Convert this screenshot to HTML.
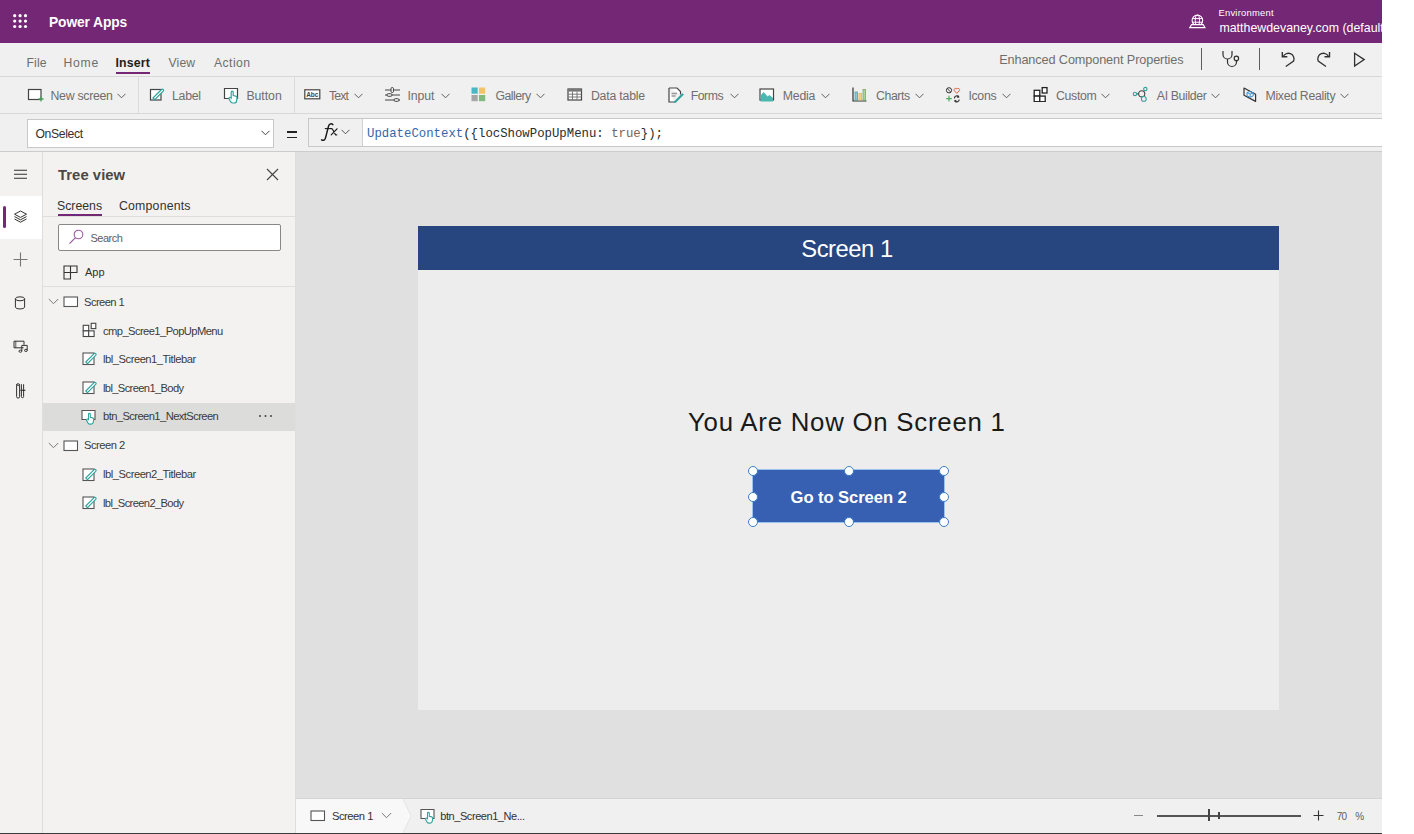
<!DOCTYPE html>
<html><head><meta charset="utf-8"><style>
html,body{margin:0;padding:0;width:1414px;height:834px;overflow:hidden;background:#ffffff;}
.t{position:absolute;white-space:pre;font-family:"Liberation Sans",sans-serif;}
.r{position:absolute;}
</style></head><body>
<div class="r" style="left:0px;top:0px;width:1382px;height:43px;background:#742774;"></div>
<div class="r" style="left:0px;top:43px;width:1382px;height:33px;background:#f0f0f0;"></div>
<div class="r" style="left:0px;top:76px;width:1382px;height:1px;background:#d8d8d8;"></div>
<div class="r" style="left:0px;top:77px;width:1382px;height:36px;background:#f0f0f0;"></div>
<div class="r" style="left:0px;top:113px;width:1382px;height:1px;background:#d8d8d8;"></div>
<div class="r" style="left:0px;top:114px;width:1382px;height:37px;background:#f0f0f0;"></div>
<div class="r" style="left:0px;top:151px;width:1382px;height:1px;background:#cccccc;"></div>
<div class="r" style="left:0px;top:152px;width:42px;height:681px;background:#f3f2f1;"></div>
<div class="r" style="left:42px;top:152px;width:1px;height:681px;background:#dedede;"></div>
<div class="r" style="left:43px;top:152px;width:252px;height:681px;background:#f3f2f1;"></div>
<div class="r" style="left:295px;top:152px;width:1px;height:681px;background:#dedede;"></div>
<div class="r" style="left:296px;top:152px;width:1086px;height:646px;background:#e0e0e0;"></div>
<div class="r" style="left:296px;top:798px;width:1086px;height:35px;background:#f0f0f0;"></div>
<div class="r" style="left:296px;top:798px;width:1086px;height:1px;background:#d4d4d4;"></div>
<div class="r" style="left:0px;top:833px;width:1382px;height:1px;background:#3a3a3a;"></div>
<svg class="r" style="left:13px;top:14px;" width="15" height="15" viewBox="0 0 15 15" fill="none"><circle cx="1.7" cy="1.7" r="1.6" fill="#fff"/><circle cx="1.7" cy="7.1" r="1.6" fill="#fff"/><circle cx="1.7" cy="12.5" r="1.6" fill="#fff"/><circle cx="7.1" cy="1.7" r="1.6" fill="#fff"/><circle cx="7.1" cy="7.1" r="1.6" fill="#fff"/><circle cx="7.1" cy="12.5" r="1.6" fill="#fff"/><circle cx="12.5" cy="1.7" r="1.6" fill="#fff"/><circle cx="12.5" cy="7.1" r="1.6" fill="#fff"/><circle cx="12.5" cy="12.5" r="1.6" fill="#fff"/></svg>
<div class="t" style="left:49px;top:16.02px;font-size:13.8px;line-height:13.8px;color:#ffffff;font-weight:700;font-family:'Liberation Sans';letter-spacing:-0.111px;">Power Apps</div>
<svg class="r" style="left:1189px;top:14px;" width="18" height="15" viewBox="0 0 18 15" fill="none"><circle cx="8.4" cy="6.4" r="5.3" stroke="#fff" stroke-width="1.1"/><ellipse cx="8.4" cy="6.4" rx="2.1" ry="5.3" stroke="#fff" stroke-width="1"/><path d="M3.3 4.6h10.2M3.3 8.2h10.2" stroke="#fff" stroke-width="1"/><path d="M2.6 10.6h11.6l1.8 3h-15.2z" stroke="#fff" stroke-width="1.1" fill="#742774"/></svg>
<div class="t" style="left:1218.4px;top:7.64px;font-size:9.4px;line-height:9.4px;color:#ffffff;font-weight:400;font-family:'Liberation Sans';letter-spacing:0.26px;">Environment</div>
<div class="t" style="left:1219.4px;top:21.50px;font-size:12.4px;line-height:12.4px;color:#ffffff;font-weight:400;font-family:'Liberation Sans';letter-spacing:0px;">matthewdevaney.com (default)</div>
<div class="r" style="left:1382px;top:0px;width:32px;height:834px;background:#ffffff;"></div>
<div class="t" style="left:26.6px;top:56.97px;font-size:12.2px;line-height:12.2px;color:#706e6c;font-weight:400;font-family:'Liberation Sans';letter-spacing:0.067px;">File</div>
<div class="t" style="left:63.5px;top:56.97px;font-size:12.2px;line-height:12.2px;color:#706e6c;font-weight:400;font-family:'Liberation Sans';letter-spacing:0.767px;">Home</div>
<div class="t" style="left:168.6px;top:56.97px;font-size:12.2px;line-height:12.2px;color:#706e6c;font-weight:400;font-family:'Liberation Sans';letter-spacing:0.1px;">View</div>
<div class="t" style="left:214px;top:56.97px;font-size:12.2px;line-height:12.2px;color:#706e6c;font-weight:400;font-family:'Liberation Sans';letter-spacing:0.44px;">Action</div>
<div class="t" style="left:115.4px;top:56.89px;font-size:12.3px;line-height:12.3px;color:#201f1e;font-weight:700;font-family:'Liberation Sans';letter-spacing:0.2px;">Insert</div>
<div class="r" style="left:116px;top:72px;width:34px;height:2px;background:#742774;"></div>
<div class="t" style="left:999.2px;top:54.45px;font-size:12.7px;line-height:12.7px;color:#706e6c;font-weight:400;font-family:'Liberation Sans';letter-spacing:-0.114px;">Enhanced Component Properties</div>
<div class="r" style="left:1201px;top:48px;width:1px;height:22px;background:#605e5c;"></div>
<div class="r" style="left:1259px;top:48px;width:1px;height:22px;background:#605e5c;"></div>
<svg class="r" style="left:1215px;top:46px;" width="160" height="26" viewBox="0 0 160 26" fill="none"><path d="M8 5V8.5a4.5 4.5 0 0 0 9 0V5" stroke="#323130" stroke-width="1.2"/><path d="M12.5 13v3a4.5 4.5 0 0 0 9 0v-1.5" stroke="#323130" stroke-width="1.2"/><circle cx="21.4" cy="12.4" r="2.2" stroke="#323130" stroke-width="1.2" fill="#f0f0f0"/><path d="M67.3 6v4.8h5" stroke="#323130" stroke-width="1.4"/><path d="M68.2 10.8A5.6 5.6 0 1 1 78.6 15L70.8 20.5" stroke="#323130" stroke-width="1.3"/><path d="M114.5 6v4.8h-5" stroke="#323130" stroke-width="1.4"/><path d="M113.6 10.8A5.6 5.6 0 1 0 103.2 15L111 20.5" stroke="#323130" stroke-width="1.3"/><path d="M139.6 7.2L149.2 13.6L139.6 20z" stroke="#323130" stroke-width="1.3" stroke-linejoin="miter"/></svg>
<div class="r" style="left:138px;top:77px;width:1px;height:36px;background:#dcdcdc;"></div>
<div class="r" style="left:294px;top:77px;width:1px;height:36px;background:#dcdcdc;"></div>
<svg class="r" style="left:27px;top:88px;" width="17" height="14" viewBox="0 0 17 14" fill="none"><rect x="1.5" y="1.5" width="12.5" height="10" fill="#fff" stroke="#444" stroke-width="1.2"/><path d="M14 8.5v5M11.5 11h5" stroke="#4a9b5a" stroke-width="1.3"/></svg>
<div class="t" style="left:50.5px;top:89.59px;font-size:12.3px;line-height:12.3px;color:#706e6c;font-weight:400;font-family:'Liberation Sans';letter-spacing:-0.278px;">New screen</div>
<svg class="r" style="left:117px;top:93.2px;" width="9" height="6" viewBox="0 0 9 6" fill="none"><path d="M0.5 0.8l4 4l4-4" stroke="#605e5c" stroke-width="1"/></svg>
<svg class="r" style="left:149px;top:87px;" width="16" height="15" viewBox="0 0 16 15" fill="none"><rect x="1.5" y="2.5" width="10.5" height="10.5" fill="#fff" stroke="#444" stroke-width="1.2"/><path d="M4 11l8.5-8.5a1.2 1.2 0 0 1 1.7 1.7L5.7 12.7z" fill="#fff" stroke="#2fa39c" stroke-width="1.2"/></svg>
<div class="t" style="left:172px;top:89.59px;font-size:12.3px;line-height:12.3px;color:#706e6c;font-weight:400;font-family:'Liberation Sans';letter-spacing:-0.25px;">Label</div>
<svg class="r" style="left:223px;top:87px;" width="17" height="17" viewBox="0 0 17 17" fill="none"><path d="M6 11.5H1.5v-10h13v10h-1" fill="#fff" stroke="#444" stroke-width="1.2"/><path d="M7.5 14.5l-1.5-3a1 1 0 0 1 1.6-1l0.6 0.6v-6a1 1 0 0 1 2 0v3.5l2.6 0.6a1.5 1.5 0 0 1 1.2 1.6l-0.4 3a2.5 2.5 0 0 1-2.5 2.2h-1.5a2.5 2.5 0 0 1-2.1-1.5z" fill="#fff" stroke="#2fa39c" stroke-width="1.2"/></svg>
<div class="t" style="left:246.4px;top:89.59px;font-size:12.3px;line-height:12.3px;color:#706e6c;font-weight:400;font-family:'Liberation Sans';letter-spacing:-0.04px;">Button</div>
<svg class="r" style="left:304px;top:89px;" width="17" height="11" viewBox="0 0 17 11" fill="none"><rect x="0.8" y="0.8" width="15" height="9" fill="#fff" stroke="#444" stroke-width="1.2"/><text x="8.3" y="7.6" font-family="Liberation Sans" font-size="6.5" font-weight="700" fill="#444" text-anchor="middle">Abc</text></svg>
<div class="t" style="left:329px;top:89.59px;font-size:12.3px;line-height:12.3px;color:#706e6c;font-weight:400;font-family:'Liberation Sans';letter-spacing:-0.867px;">Text</div>
<svg class="r" style="left:354px;top:93.2px;" width="9" height="6" viewBox="0 0 9 6" fill="none"><path d="M0.5 0.8l4 4l4-4" stroke="#605e5c" stroke-width="1"/></svg>
<svg class="r" style="left:384px;top:86px;" width="17" height="17" viewBox="0 0 17 17" fill="none"><path d="M1 4h15M1 9h15M1 14h15" stroke="#444" stroke-width="1.1"/><rect x="7" y="1.5" width="2.5" height="5" rx="1.2" fill="#f0f0f0" stroke="#444" stroke-width="1"/><rect x="3" y="7.7" width="5" height="2.6" rx="1.2" fill="#f0f0f0" stroke="#444" stroke-width="1"/><rect x="10" y="12.7" width="5" height="2.6" rx="1.2" fill="#f0f0f0" stroke="#444" stroke-width="1"/></svg>
<div class="t" style="left:407.4px;top:89.59px;font-size:12.3px;line-height:12.3px;color:#706e6c;font-weight:400;font-family:'Liberation Sans';letter-spacing:-0.05px;">Input</div>
<svg class="r" style="left:441px;top:93.2px;" width="9" height="6" viewBox="0 0 9 6" fill="none"><path d="M0.5 0.8l4 4l4-4" stroke="#605e5c" stroke-width="1"/></svg>
<svg class="r" style="left:471px;top:87px;" width="15" height="15" viewBox="0 0 15 15" fill="none"><rect x="0.5" y="0.5" width="6.2" height="6.2" fill="#4ab7c3"/><rect x="8" y="0.5" width="6.2" height="6.2" fill="#f3c26e"/><rect x="0.5" y="8" width="6.2" height="6.2" fill="#a6a6a6"/><rect x="8" y="8" width="6.2" height="6.2" fill="#82b97e"/></svg>
<div class="t" style="left:495.5px;top:89.59px;font-size:12.3px;line-height:12.3px;color:#706e6c;font-weight:400;font-family:'Liberation Sans';letter-spacing:-0.55px;">Gallery</div>
<svg class="r" style="left:536px;top:93.2px;" width="9" height="6" viewBox="0 0 9 6" fill="none"><path d="M0.5 0.8l4 4l4-4" stroke="#605e5c" stroke-width="1"/></svg>
<svg class="r" style="left:567px;top:88px;" width="16" height="13" viewBox="0 0 16 13" fill="none"><rect x="1" y="1" width="13.5" height="11" fill="#fff" stroke="#444" stroke-width="1.2"/><rect x="1" y="1" width="13.5" height="2.6" fill="#777"/><path d="M1 6.2h13.5M1 9h13.5M5.5 3.5v8.5M10 3.5v8.5" stroke="#777" stroke-width="1"/></svg>
<div class="t" style="left:590.9px;top:89.59px;font-size:12.3px;line-height:12.3px;color:#706e6c;font-weight:400;font-family:'Liberation Sans';letter-spacing:-0.2px;">Data table</div>
<svg class="r" style="left:668px;top:87px;" width="16" height="16" viewBox="0 0 16 16" fill="none"><path d="M1 1h8l3.5 3.5v3M1 1v14h5" fill="#fff" stroke="#444" stroke-width="1.2"/><path d="M3.5 6.5h5.5M3.5 9h4" stroke="#999" stroke-width="1.5"/><path d="M7 15l7.5-7.5" stroke="#2fa39c" stroke-width="2.2" stroke-linecap="round"/></svg>
<div class="t" style="left:690.7px;top:89.59px;font-size:12.3px;line-height:12.3px;color:#706e6c;font-weight:400;font-family:'Liberation Sans';letter-spacing:-0.5px;">Forms</div>
<svg class="r" style="left:729.5px;top:93.2px;" width="9" height="6" viewBox="0 0 9 6" fill="none"><path d="M0.5 0.8l4 4l4-4" stroke="#605e5c" stroke-width="1"/></svg>
<svg class="r" style="left:759px;top:88px;" width="16" height="14" viewBox="0 0 16 14" fill="none"><rect x="1" y="1" width="13.5" height="11" fill="#fff" stroke="#444" stroke-width="1.2"/><path d="M1.6 7.5l3-3.5l4 4.5l2-1.5l3.3 3v3.4H1.6z" fill="#4ab7b1"/></svg>
<div class="t" style="left:782.8px;top:89.59px;font-size:12.3px;line-height:12.3px;color:#706e6c;font-weight:400;font-family:'Liberation Sans';letter-spacing:-0.25px;">Media</div>
<svg class="r" style="left:820.5px;top:93.2px;" width="9" height="6" viewBox="0 0 9 6" fill="none"><path d="M0.5 0.8l4 4l4-4" stroke="#605e5c" stroke-width="1"/></svg>
<svg class="r" style="left:852px;top:87px;" width="15" height="15" viewBox="0 0 15 15" fill="none"><path d="M1 0.5v13.5h13.5" stroke="#333" stroke-width="1.2"/><rect x="3" y="5" width="2.6" height="8" fill="#8fc8d4" stroke="#4aa7b5" stroke-width="0.8"/><rect x="7" y="6.5" width="2.6" height="6.5" fill="#f7cf8f" stroke="#eeb35c" stroke-width="0.8"/><rect x="11" y="2.5" width="2.6" height="10.5" fill="#a9d49b" stroke="#6db16a" stroke-width="0.8"/></svg>
<div class="t" style="left:876px;top:89.59px;font-size:12.3px;line-height:12.3px;color:#706e6c;font-weight:400;font-family:'Liberation Sans';letter-spacing:-0.42px;">Charts</div>
<svg class="r" style="left:914.5px;top:93.2px;" width="9" height="6" viewBox="0 0 9 6" fill="none"><path d="M0.5 0.8l4 4l4-4" stroke="#605e5c" stroke-width="1"/></svg>
<svg class="r" style="left:945px;top:86px;" width="17" height="17" viewBox="0 0 17 17" fill="none"><circle cx="4" cy="4.3" r="2.6" stroke="#333" stroke-width="1"/><path d="M2.2 2.5l3.6 3.6" stroke="#333" stroke-width="0.9"/><path d="M11.8 7.3l-2.5-2.6a1.5 1.5 0 0 1 2.5-1.7a1.5 1.5 0 0 1 2.5 1.7z" stroke="#e2603f" stroke-width="1"/><path d="M4 9.8v5.6M1.2 12.6h5.6" stroke="#4daa5a" stroke-width="1.2"/><path d="M9.4 12.4a2.4 2.4 0 0 1 4.3-1.5M14.2 13.4a2.4 2.4 0 0 1-4.3 1.5" stroke="#333" stroke-width="1.1"/><path d="M13 9.6l1.2 1.6l-1.8 0.3zM10.6 16.2l-1.2-1.6l1.8-0.3z" fill="#333" stroke="#333" stroke-width="0.6"/></svg>
<div class="t" style="left:968.4px;top:89.59px;font-size:12.3px;line-height:12.3px;color:#706e6c;font-weight:400;font-family:'Liberation Sans';letter-spacing:-0.3px;">Icons</div>
<svg class="r" style="left:1001.5px;top:93.2px;" width="9" height="6" viewBox="0 0 9 6" fill="none"><path d="M0.5 0.8l4 4l4-4" stroke="#605e5c" stroke-width="1"/></svg>
<svg class="r" style="left:1033px;top:86px;" width="15" height="16" viewBox="0 0 15 16" fill="none"><rect x="1.2" y="4.3" width="5.6" height="5.8" fill="#fff" stroke="#222" stroke-width="1.3"/><rect x="1.2" y="10.1" width="5.6" height="5.6" fill="#fff" stroke="#222" stroke-width="1.3"/><rect x="6.8" y="10.1" width="5.4" height="5.6" fill="#fff" stroke="#222" stroke-width="1.3"/><rect x="9.2" y="1.6" width="4.8" height="5.4" fill="#fff" stroke="#222" stroke-width="1.3"/></svg>
<div class="t" style="left:1056px;top:89.59px;font-size:12.3px;line-height:12.3px;color:#706e6c;font-weight:400;font-family:'Liberation Sans';letter-spacing:-0.32px;">Custom</div>
<svg class="r" style="left:1101px;top:93.2px;" width="9" height="6" viewBox="0 0 9 6" fill="none"><path d="M0.5 0.8l4 4l4-4" stroke="#605e5c" stroke-width="1"/></svg>
<svg class="r" style="left:1132px;top:86px;" width="17" height="17" viewBox="0 0 17 17" fill="none"><circle cx="9.7" cy="7.8" r="3.1" stroke="#444" stroke-width="1.1"/><path d="M4.6 7.9h2" stroke="#444" stroke-width="1.1"/><circle cx="2.9" cy="7.9" r="1.7" fill="#f0f0f0" stroke="#2fa39c" stroke-width="1.1"/><circle cx="13.3" cy="3.1" r="1.7" fill="#f0f0f0" stroke="#2fa39c" stroke-width="1.1"/><circle cx="11.8" cy="12.9" r="2.4" fill="#f0f0f0" stroke="#2fa39c" stroke-width="1.1"/></svg>
<div class="t" style="left:1156.8px;top:89.59px;font-size:12.3px;line-height:12.3px;color:#706e6c;font-weight:400;font-family:'Liberation Sans';letter-spacing:-0.356px;">AI Builder</div>
<svg class="r" style="left:1211px;top:93.2px;" width="9" height="6" viewBox="0 0 9 6" fill="none"><path d="M0.5 0.8l4 4l4-4" stroke="#605e5c" stroke-width="1"/></svg>
<svg class="r" style="left:1242px;top:86px;" width="16" height="17" viewBox="0 0 16 17" fill="none"><path d="M2 2l11.6 6.2v7.2L2 9.2z" stroke="#333" stroke-width="1.2" stroke-linejoin="round"/><path d="M5 6.6l3-1.2l3.2 1.4v3.2l-3 1.2l-3.2-1.4z" stroke="#3a8fd0" stroke-width="1"/><path d="M5 6.6l3.2 1.4l3-1.2M8.2 8v3.2" stroke="#3a8fd0" stroke-width="0.9"/></svg>
<div class="t" style="left:1265.5px;top:89.59px;font-size:12.3px;line-height:12.3px;color:#706e6c;font-weight:400;font-family:'Liberation Sans';letter-spacing:-0.308px;">Mixed Reality</div>
<svg class="r" style="left:1340px;top:93.2px;" width="9" height="6" viewBox="0 0 9 6" fill="none"><path d="M0.5 0.8l4 4l4-4" stroke="#605e5c" stroke-width="1"/></svg>
<div class="r" style="left:27px;top:119px;width:247px;height:29px;background:#ffffff;box-sizing:border-box;border:1px solid #c8c8c8;"></div>
<div class="t" style="left:35.5px;top:127.57px;font-size:12.2px;line-height:12.2px;color:#323130;font-weight:400;font-family:'Liberation Sans';letter-spacing:-0.357px;">OnSelect</div>
<svg class="r" style="left:261px;top:130.2px;" width="9" height="6" viewBox="0 0 9 6" fill="none"><path d="M0.5 0.8l4 4l4-4" stroke="#444" stroke-width="1"/></svg>
<div class="r" style="left:287px;top:131px;width:10px;height:1.5px;background:#222;"></div>
<div class="r" style="left:287px;top:136.5px;width:10px;height:1.5px;background:#222;"></div>
<div class="r" style="left:308px;top:118px;width:1074px;height:29px;background:#ffffff;box-sizing:border-box;border:1px solid #c8c8c8;border-right:none;"></div>
<div class="r" style="left:309px;top:119px;width:53px;height:27px;background:#f0f0f0;"></div>
<div class="r" style="left:362px;top:119px;width:1px;height:27px;background:#d0d0d0;"></div>
<svg class="r" style="left:318px;top:120px;" width="22" height="24" viewBox="0 0 22 24" fill="none"><path d="M14.8 4.6C13.6 3.2 11.2 3.4 10.4 6.6L7.6 17.6C7 19.9 5.4 21 3.6 19.9" stroke="#1a1a1a" stroke-width="1.5" stroke-linecap="round"/><path d="M6.8 8.6H13" stroke="#1a1a1a" stroke-width="1.1"/><path d="M13.2 8.6C14.2 8.4 14.6 9 15 10L17.2 14.2C17.6 15 18.2 15.2 18.8 14.8M19 8.8L13.2 14.8" stroke="#1a1a1a" stroke-width="1.2" stroke-linecap="round"/></svg>
<svg class="r" style="left:341px;top:129.2px;" width="9" height="6" viewBox="0 0 9 6" fill="none"><path d="M0.5 0.8l4 4l4-4" stroke="#555" stroke-width="1"/></svg>
<div class="t" style="left:367px;top:127.86px;font-size:12.33px;line-height:12.33px;color:#2b2b2b;font-weight:400;font-family:'Liberation Mono';letter-spacing:0px;"><span style="color:#3567a8">UpdateContext</span>({locShowPopUpMenu: <span style="color:#7a6256">true</span>});</div>
<svg class="r" style="left:13px;top:169px;" width="15" height="11" viewBox="0 0 15 11" fill="none"><path d="M1 1.3h13M1 5.3h13M1 9.3h13" stroke="#323130" stroke-width="1.1"/></svg>
<div class="r" style="left:0px;top:196px;width:42px;height:43px;background:#ffffff;"></div>
<div class="r" style="left:3px;top:206px;width:3px;height:22px;background:#742774;border-radius:1.5px;"></div>
<svg class="r" style="left:13px;top:210px;" width="15" height="14" viewBox="0 0 15 14" fill="none"><path d="M7.5 1l6 3.2l-6 3.2l-6-3.2z" stroke="#323130" stroke-width="1"/><path d="M1.5 6.6l6 3.2l6-3.2" stroke="#323130" stroke-width="1"/><path d="M1.5 9l6 3.2l6-3.2" stroke="#323130" stroke-width="1"/></svg>
<svg class="r" style="left:13px;top:252px;" width="15" height="15" viewBox="0 0 15 15" fill="none"><path d="M7.5 0.5v14M0.5 7.5h14" stroke="#777" stroke-width="1.1"/></svg>
<svg class="r" style="left:14px;top:296px;" width="12" height="14" viewBox="0 0 12 14" fill="none"><ellipse cx="6" cy="2.8" rx="4.6" ry="2" stroke="#323130" stroke-width="1"/><path d="M1.4 2.8v8.2a4.6 2 0 0 0 9.2 0v-8.2" stroke="#323130" stroke-width="1"/></svg>
<svg class="r" style="left:13px;top:340px;" width="16" height="14" viewBox="0 0 16 14" fill="none"><path d="M10.6 7.8H1V1.2h10v3.6" stroke="#323130" stroke-width="1"/><path d="M2.8 1.2v6.6" stroke="#323130" stroke-width="0.8"/><ellipse cx="7.4" cy="11.2" rx="1.4" ry="1.1" stroke="#323130" stroke-width="1"/><ellipse cx="12.9" cy="10.4" rx="1.4" ry="1.1" stroke="#323130" stroke-width="1"/><path d="M8.8 11V5.4h5.4v5" stroke="#323130" stroke-width="1"/></svg>
<svg class="r" style="left:14px;top:382px;" width="13" height="17" viewBox="0 0 13 17" fill="none"><path d="M2.6 3.2a1.5 1.5 0 0 1 3 0v11.4a1.5 1.5 0 0 1-3 0z" stroke="#323130" stroke-width="1"/><path d="M2.2 2.2l1.9 1.6l1.9-1.6" stroke="#323130" stroke-width="0.9"/><path d="M7.4 2.2v12.4a1.1 1.1 0 0 0 2.2 0V2.2" stroke="#323130" stroke-width="1"/><path d="M6.4 8.3h5" stroke="#323130" stroke-width="1.2"/></svg>
<div class="t" style="left:58px;top:167.97px;font-size:14.8px;line-height:14.8px;color:#4a4846;font-weight:700;font-family:'Liberation Sans';letter-spacing:0.062px;">Tree view</div>
<svg class="r" style="left:266px;top:168px;" width="13" height="13" viewBox="0 0 13 13" fill="none"><path d="M1 1l11 11M12 1l-11 11" stroke="#444" stroke-width="1.1"/></svg>
<div class="t" style="left:57px;top:199.99px;font-size:12.3px;line-height:12.3px;color:#323130;font-weight:400;font-family:'Liberation Sans';letter-spacing:0.0px;">Screens</div>
<div class="t" style="left:119px;top:199.99px;font-size:12.3px;line-height:12.3px;color:#323130;font-weight:400;font-family:'Liberation Sans';letter-spacing:0.2px;">Components</div>
<div class="r" style="left:58px;top:214px;width:44px;height:2px;background:#742774;"></div>
<div class="r" style="left:43px;top:216px;width:252px;height:1px;background:#dedede;"></div>
<div class="r" style="left:58px;top:224px;width:223px;height:27px;background:#ffffff;box-sizing:border-box;border:1px solid #8a8886;border-radius:2px;"></div>
<svg class="r" style="left:68px;top:229px;" width="17" height="16" viewBox="0 0 17 16" fill="none"><circle cx="10.5" cy="5.5" r="4.3" stroke="#9b5ba0" stroke-width="1.1"/><path d="M7.5 8.6l-6 6" stroke="#9b5ba0" stroke-width="1.2"/></svg>
<div class="t" style="left:90.5px;top:232.69px;font-size:11px;line-height:11px;color:#605e5c;font-weight:400;font-family:'Liberation Sans';letter-spacing:-0.5px;">Search</div>
<svg class="r" style="left:63px;top:265px;" width="15" height="15" viewBox="0 0 15 15" fill="none"><path d="M1 1h13v6.5h-6.5v6.5h-6.5z" stroke="#333" stroke-width="1.1"/><path d="M7.5 1v6.5h-6.5M1 7.5" stroke="#333" stroke-width="1.1"/></svg>
<div class="t" style="left:85px;top:267.49px;font-size:11px;line-height:11px;color:#323130;font-weight:400;font-family:'Liberation Sans';letter-spacing:0.0px;">App</div>
<div class="r" style="left:43px;top:286px;width:252px;height:1px;background:#dedede;"></div>
<div class="r" style="left:43px;top:403px;width:252px;height:28px;background:#dcdcdb;"></div>
<svg class="r" style="left:48px;top:298px;" width="11" height="7" viewBox="0 0 11 7" fill="none"><path d="M0.8 1l4.7 4.7l4.7-4.7" stroke="#777" stroke-width="1"/></svg>
<svg class="r" style="left:63px;top:296px;" width="16" height="12" viewBox="0 0 16 12" fill="none"><rect x="1" y="1" width="13.5" height="9.5" fill="#fff" stroke="#555" stroke-width="1.1"/></svg>
<div class="t" style="left:84px;top:297.02px;font-size:11.2px;line-height:11.2px;color:#3b3a39;font-weight:400;font-family:'Liberation Sans';letter-spacing:-0.571px;">Screen 1</div>
<svg class="r" style="left:82px;top:322px;" width="15" height="16" viewBox="0 0 15 16" fill="none"><rect x="1.2" y="3.3" width="5.5" height="5.6" fill="#fff" stroke="#444" stroke-width="1.1"/><rect x="1.2" y="8.9" width="5.5" height="5.6" fill="#fff" stroke="#444" stroke-width="1.1"/><rect x="6.7" y="8.9" width="5.4" height="5.6" fill="#fff" stroke="#444" stroke-width="1.1"/><rect x="9.2" y="1.3" width="4.6" height="5.3" fill="#fff" stroke="#444" stroke-width="1.1"/></svg>
<div class="t" style="left:103px;top:325.62px;font-size:11.2px;line-height:11.2px;color:#3b3a39;font-weight:400;font-family:'Liberation Sans';letter-spacing:-0.579px;">cmp_Scree1_PopUpMenu</div>
<svg class="r" style="left:82px;top:351px;" width="15" height="15" viewBox="0 0 15 15" fill="none"><rect x="1" y="2" width="11" height="11.5" fill="#fff" stroke="#555" stroke-width="1.1"/><path d="M3.8 11l8.3-8.3a1.1 1.1 0 0 1 1.6 1.6L5.4 12.6z" fill="#fff" stroke="#2fa39c" stroke-width="1.1"/></svg>
<div class="t" style="left:103px;top:354.12px;font-size:11.2px;line-height:11.2px;color:#3b3a39;font-weight:400;font-family:'Liberation Sans';letter-spacing:-0.474px;">lbl_Screen1_Titlebar</div>
<svg class="r" style="left:82px;top:380px;" width="15" height="15" viewBox="0 0 15 15" fill="none"><rect x="1" y="2" width="11" height="11.5" fill="#fff" stroke="#555" stroke-width="1.1"/><path d="M3.8 11l8.3-8.3a1.1 1.1 0 0 1 1.6 1.6L5.4 12.6z" fill="#fff" stroke="#2fa39c" stroke-width="1.1"/></svg>
<div class="t" style="left:103px;top:382.72px;font-size:11.2px;line-height:11.2px;color:#3b3a39;font-weight:400;font-family:'Liberation Sans';letter-spacing:-0.647px;">lbl_Screen1_Body</div>
<svg class="r" style="left:81px;top:409px;" width="16" height="16" viewBox="0 0 16 16" fill="none"><path d="M5 10.5H1v-9h13v9h-1" fill="#fff" stroke="#555" stroke-width="1.1"/><path d="M6.8 13.8l-1.3-2.7a0.9 0.9 0 0 1 1.4-0.9l0.6 0.5v-5.5a0.9 0.9 0 0 1 1.8 0v3.2l2.3 0.5a1.4 1.4 0 0 1 1.1 1.5l-0.4 2.7a2.3 2.3 0 0 1-2.3 2h-1.3a2.3 2.3 0 0 1-1.9-1.3z" fill="#fff" stroke="#2fa39c" stroke-width="1.1"/></svg>
<div class="t" style="left:103px;top:411.32px;font-size:11.2px;line-height:11.2px;color:#3b3a39;font-weight:400;font-family:'Liberation Sans';letter-spacing:-0.586px;">btn_Screen1_NextScreen</div>
<svg class="r" style="left:258px;top:414px;" width="15" height="4" viewBox="0 0 15 4" fill="none"><circle cx="2" cy="2" r="1" fill="#444"/><circle cx="7.5" cy="2" r="1" fill="#444"/><circle cx="13" cy="2" r="1" fill="#444"/></svg>
<svg class="r" style="left:48px;top:442px;" width="11" height="7" viewBox="0 0 11 7" fill="none"><path d="M0.8 1l4.7 4.7l4.7-4.7" stroke="#777" stroke-width="1"/></svg>
<svg class="r" style="left:63px;top:440px;" width="16" height="12" viewBox="0 0 16 12" fill="none"><rect x="1" y="1" width="13.5" height="9.5" fill="#fff" stroke="#555" stroke-width="1.1"/></svg>
<div class="t" style="left:84px;top:440.12px;font-size:11.2px;line-height:11.2px;color:#3b3a39;font-weight:400;font-family:'Liberation Sans';letter-spacing:-0.5px;">Screen 2</div>
<svg class="r" style="left:82px;top:467px;" width="15" height="15" viewBox="0 0 15 15" fill="none"><rect x="1" y="2" width="11" height="11.5" fill="#fff" stroke="#555" stroke-width="1.1"/><path d="M3.8 11l8.3-8.3a1.1 1.1 0 0 1 1.6 1.6L5.4 12.6z" fill="#fff" stroke="#2fa39c" stroke-width="1.1"/></svg>
<div class="t" style="left:103px;top:469.02px;font-size:11.2px;line-height:11.2px;color:#3b3a39;font-weight:400;font-family:'Liberation Sans';letter-spacing:-0.474px;">lbl_Screen2_Titlebar</div>
<svg class="r" style="left:82px;top:495px;" width="15" height="15" viewBox="0 0 15 15" fill="none"><rect x="1" y="2" width="11" height="11.5" fill="#fff" stroke="#555" stroke-width="1.1"/><path d="M3.8 11l8.3-8.3a1.1 1.1 0 0 1 1.6 1.6L5.4 12.6z" fill="#fff" stroke="#2fa39c" stroke-width="1.1"/></svg>
<div class="t" style="left:103px;top:497.62px;font-size:11.2px;line-height:11.2px;color:#3b3a39;font-weight:400;font-family:'Liberation Sans';letter-spacing:-0.647px;">lbl_Screen2_Body</div>
<div class="r" style="left:418px;top:226px;width:861px;height:484px;background:#ededed;"></div>
<div class="r" style="left:418px;top:226px;width:861px;height:44px;background:#27467f;"></div>
<div class="t" style="left:801.3px;top:237.05px;font-size:23.8px;line-height:23.8px;color:#ffffff;font-weight:400;font-family:'Liberation Sans';letter-spacing:-0.486px;">Screen 1</div>
<div class="t" style="left:688px;top:409.86px;font-size:25.8px;line-height:25.8px;color:#1a1a1a;font-weight:400;font-family:'Liberation Sans';letter-spacing:0.759px;">You Are Now On Screen 1</div>
<div class="r" style="left:753px;top:470px;width:191px;height:52px;background:#3860b2;box-shadow:0 0 0 1px #9cc3ee;"></div>
<div class="t" style="left:790.6px;top:489.75px;font-size:16.6px;line-height:16.6px;color:#ffffff;font-weight:700;font-family:'Liberation Sans';letter-spacing:-0.077px;">Go to Screen 2</div>
<div class="r" style="left:748px;top:465.5px;width:8px;height:8px;border:1px solid #3a7ec8;border-radius:50%;background:#fff;"></div>
<div class="r" style="left:748px;top:491.5px;width:8px;height:8px;border:1px solid #3a7ec8;border-radius:50%;background:#fff;"></div>
<div class="r" style="left:748px;top:516.5px;width:8px;height:8px;border:1px solid #3a7ec8;border-radius:50%;background:#fff;"></div>
<div class="r" style="left:843.5px;top:465.5px;width:8px;height:8px;border:1px solid #3a7ec8;border-radius:50%;background:#fff;"></div>
<div class="r" style="left:843.5px;top:516.5px;width:8px;height:8px;border:1px solid #3a7ec8;border-radius:50%;background:#fff;"></div>
<div class="r" style="left:938.5px;top:465.5px;width:8px;height:8px;border:1px solid #3a7ec8;border-radius:50%;background:#fff;"></div>
<div class="r" style="left:938.5px;top:491.5px;width:8px;height:8px;border:1px solid #3a7ec8;border-radius:50%;background:#fff;"></div>
<div class="r" style="left:938.5px;top:516.5px;width:8px;height:8px;border:1px solid #3a7ec8;border-radius:50%;background:#fff;"></div>
<svg class="r" style="left:296px;top:799px;" width="116" height="34" viewBox="0 0 116 34" fill="none"><path d="M0 0h107l8 17l-8 17h-107z" fill="#f8f8f8"/><path d="M107 0l8 17l-8 17" stroke="#e4e4e4" stroke-width="1"/></svg>
<svg class="r" style="left:310px;top:810px;" width="16" height="12" viewBox="0 0 16 12" fill="none"><rect x="1" y="1" width="13.5" height="9.5" fill="#fff" stroke="#555" stroke-width="1.1"/></svg>
<div class="t" style="left:332px;top:810.82px;font-size:11.2px;line-height:11.2px;color:#323130;font-weight:400;font-family:'Liberation Sans';letter-spacing:-0.471px;">Screen 1</div>
<svg class="r" style="left:380.5px;top:812px;" width="11" height="7" viewBox="0 0 11 7" fill="none"><path d="M0.8 1l4.7 4.7l4.7-4.7" stroke="#777" stroke-width="1"/></svg>
<svg class="r" style="left:420px;top:808px;" width="16" height="16" viewBox="0 0 16 16" fill="none"><path d="M5 10.5H1v-9h13v9h-1" fill="#fff" stroke="#555" stroke-width="1.1"/><path d="M6.8 13.8l-1.3-2.7a0.9 0.9 0 0 1 1.4-0.9l0.6 0.5v-5.5a0.9 0.9 0 0 1 1.8 0v3.2l2.3 0.5a1.4 1.4 0 0 1 1.1 1.5l-0.4 2.7a2.3 2.3 0 0 1-2.3 2h-1.3a2.3 2.3 0 0 1-1.9-1.3z" fill="#fff" stroke="#2fa39c" stroke-width="1.1"/></svg>
<div class="t" style="left:440.3px;top:810.99px;font-size:11px;line-height:11px;color:#323130;font-weight:400;font-family:'Liberation Sans';letter-spacing:-0.438px;">btn_Screen1_Ne...</div>
<div class="r" style="left:1134px;top:815px;width:9px;height:1px;background:#888;"></div>
<div class="r" style="left:1157px;top:815px;width:144px;height:2px;background:#555;"></div>
<div class="r" style="left:1208px;top:809px;width:2px;height:12px;background:#444;"></div>
<div class="r" style="left:1218px;top:812px;width:2px;height:7px;background:#444;"></div>
<svg class="r" style="left:1313px;top:810px;" width="11" height="11" viewBox="0 0 11 11" fill="none"><path d="M5.5 0.5v10M0.5 5.5h10" stroke="#333" stroke-width="1.1"/></svg>
<div class="t" style="left:1336.7px;top:811.83px;font-size:10px;line-height:10px;color:#605e5c;font-weight:400;font-family:'Liberation Sans';letter-spacing:-0.7px;">70</div>
<div class="t" style="left:1355.2px;top:811.83px;font-size:10px;line-height:10px;color:#605e5c;font-weight:400;font-family:'Liberation Sans';letter-spacing:0px;">%</div>
<div class="r" style="left:1382px;top:0px;width:32px;height:834px;background:#ffffff;"></div>
</body></html>
